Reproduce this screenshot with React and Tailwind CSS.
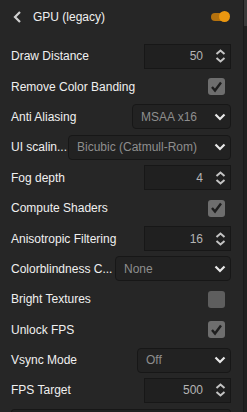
import React from "react";

const font = { fontFamily: '"Liberation Sans", Arial, sans-serif' };

function Spinner() {
    return (
        <svg width="11" height="14" viewBox="0 0 11 14" className="text-[#c4c4c4]">
            <path d="M1.5 5 L5.5 1.5 L9.5 5" fill="none" stroke="currentColor" strokeWidth="2" />
            <path d="M1.5 9 L5.5 12.5 L9.5 9" fill="none" stroke="currentColor" strokeWidth="2" />
        </svg>
    );
}

function Chevron() {
    return (
        <svg width="12" height="8" viewBox="0 0 12 8" className="text-[#e8e8e8]">
            <path d="M1.5 1.5 L6 6 L10.5 1.5" fill="none" stroke="currentColor" strokeWidth="2.2" />
        </svg>
    );
}

function NumberBox({ value }) {
    return (
        <div className="flex h-[25px] w-[87px] items-center justify-end border border-[#171717] bg-[#202020] pr-[4px]">
            <span className="mr-[12px] text-[12px] text-[#b4b4b4]">{value}</span>
            <Spinner />
        </div>
    );
}

function Dropdown({ value, width }) {
    return (
        <div className={`flex h-[25px] ${width} items-center justify-between rounded-[4px] border border-[#171717] bg-[#222222] pl-[8px] pr-[4px]`}>
            <span className="text-[12px] text-[#8e8e8e]">{value}</span>
            <Chevron />
        </div>
    );
}

function Checkbox({ checked }) {
    return (
        <div className={`mr-[6px] flex h-[17px] w-[17px] items-center justify-center rounded-[3px] ${checked ? 'bg-[#6e6e6e]' : 'bg-[#5e5e5e]'}`}>
            {checked && (
                <svg width="13" height="12" viewBox="0 0 13 12">
                    <path d="M2 6 L5 9.5 L11 1.5" fill="none" stroke="#1e1e1e" strokeWidth="2.4" />
                </svg>
            )}
        </div>
    );
}

const rows = [
    { label: 'Draw Distance', kind: 'num', value: '50' },
    { label: 'Remove Color Banding', kind: 'check', value: true },
    { label: 'Anti Aliasing', kind: 'drop', value: 'MSAA x16', width: 'w-[99px]' },
    { label: 'UI scalin...', kind: 'drop', value: 'Bicubic (Catmull-Rom)', width: 'w-[163px]' },
    { label: 'Fog depth', kind: 'num', value: '4' },
    { label: 'Compute Shaders', kind: 'check', value: true },
    { label: 'Anisotropic Filtering', kind: 'num', value: '16' },
    { label: 'Colorblindness C...', kind: 'drop', value: 'None', width: 'w-[116px]' },
    { label: 'Bright Textures', kind: 'check', value: false },
    { label: 'Unlock FPS', kind: 'check', value: true },
    { label: 'Vsync Mode', kind: 'drop', value: 'Off', width: 'w-[94px]' },
    { label: 'FPS Target', kind: 'num', value: '500' },
];

export default function App() {
    return (
        <div className="flex h-[412px] w-[247px] overflow-hidden bg-[#262626]" style={font}>
            <div className="flex flex-1 flex-col pl-[11px] pr-[12px]">
                <div className="mb-[7px] flex h-[34px] shrink-0 items-center">
                    <svg width="9" height="12" viewBox="0 0 9 12" className="ml-[2px] text-[#d0d0d0]">
                        <path d="M7 1 L2 6 L7 11" fill="none" stroke="currentColor" strokeWidth="2.2" />
                    </svg>
                    <span className="ml-[11px] text-[12px] text-[#f0f0f0]">GPU (legacy)</span>
                    <div className="relative ml-auto mr-[2px] h-[8px] w-[18px] rounded-full bg-[#b5720e]">
                        <div className="absolute right-[-1px] top-[-2px] h-[11px] w-[11px] rounded-full bg-[#eb9710]" />
                    </div>
                </div>
                {rows.map((row) => (
                    <div key={row.label} className="flex h-[30.4px] shrink-0 items-center justify-between">
                        <span className="whitespace-nowrap text-[12px] text-[#f0f0f0]">{row.label}</span>
                        {row.kind === 'num' && <NumberBox value={row.value} />}
                        {row.kind === 'check' && <Checkbox checked={row.value} />}
                        {row.kind === 'drop' && <Dropdown value={row.value} width={row.width} />}
                    </div>
                ))}
                <div className="mt-[3px] h-[25px] shrink-0 rounded-[3px] border border-[#171717] bg-[#222222]" />
            </div>
            <div className="flex w-[4px] flex-col border-l border-[#1a1a1a] bg-[#202020]">
                <div className="h-[26px] bg-[#3a3a3a]" />
            </div>
        </div>
    );
}
